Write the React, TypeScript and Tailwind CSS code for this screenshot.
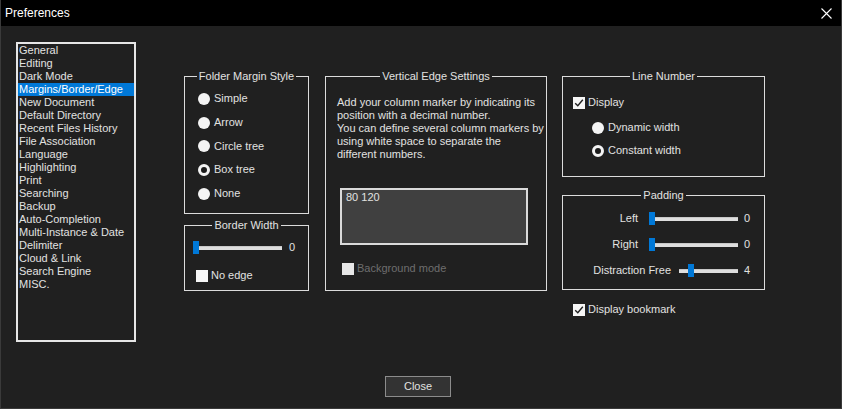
import React from "react";

const items = [
  "General",
  "Editing",
  "Dark Mode",
  "Margins/Border/Edge",
  "New Document",
  "Default Directory",
  "Recent Files History",
  "File Association",
  "Language",
  "Highlighting",
  "Print",
  "Searching",
  "Backup",
  "Auto-Completion",
  "Multi-Instance & Date",
  "Delimiter",
  "Cloud & Link",
  "Search Engine",
  "MISC.",
];

function Group({
  title,
  className,
  children,
}: {
  title: string;
  className: string;
  children?: React.ReactNode;
}) {
  return (
    <div className={"relative border border-[#dcdcdc] " + className}>
      <div className="absolute -top-[7px] left-0 right-0 flex justify-center">
        <span className="bg-[#202020] px-[2px] leading-[13px] whitespace-nowrap">{title}</span>
      </div>
      {children}
    </div>
  );
}

function Radio({ checked, label }: { checked?: boolean; label: string }) {
  return (
    <div className="flex items-center gap-[4px]">
      {checked ? (
        <span className="w-3 h-3 rounded-full border-[3px] border-[#f4f4f4] bg-[#1c1c1c] shrink-0" />
      ) : (
        <span className="w-3 h-3 rounded-full bg-[#f4f4f4] shrink-0" />
      )}
      <span className="leading-[13px] whitespace-nowrap">{label}</span>
    </div>
  );
}

function Check({ checked, disabled }: { checked?: boolean; disabled?: boolean }) {
  return (
    <span
      className={
        "w-3 h-3 shrink-0 flex items-center justify-center " +
        (disabled ? "bg-[#e6e6e6]" : "bg-[#f6f6f6]")
      }
    >
      {checked && (
        <svg width="10" height="10" viewBox="0 0 10 10">
          <path d="M1.2 5.2 L3.8 7.8 L8.8 1.8" fill="none" stroke="#202020" strokeWidth="1.4" />
        </svg>
      )}
    </span>
  );
}

function Slider({ width, thumb }: { width: number; thumb: number }) {
  return (
    <div className="relative h-[13px] shrink-0" style={{ width }}>
      <div className="absolute left-0 right-0 top-[4.5px] h-[4px] bg-[#dedede] border-t border-[#c8c8c8]" />
      <div className="absolute top-0 h-[13px] w-[6px] bg-[#0078d7]" style={{ left: thumb }} />
    </div>
  );
}

export default function App() {
  return (
    <div className="w-[842px] h-[409px] flex flex-col bg-[#202020] border-l border-r border-b border-[#3a3a3a] font-['Liberation_Sans',Arial,sans-serif] text-[11px] text-[#e2e2e0] overflow-hidden">
      <div className="h-[26px] shrink-0 bg-black flex items-center justify-between pl-[4px] pr-[9px]">
        <span className="text-[12px] text-white">Preferences</span>
        <svg width="11" height="11" viewBox="0 0 11 11">
          <path d="M0.5 0.5 L10.5 10.5 M10.5 0.5 L0.5 10.5" stroke="#ffffff" strokeWidth="1.1" />
        </svg>
      </div>

      <div className="flex items-start pt-[16px] pl-[15px]">
        {/* Category list */}
        <div className="w-[120px] h-[300px] shrink-0 border-2 border-[#e6e6e6]">
          {items.map((it) => (
            <div
              key={it}
              className={
                "h-[13px] leading-[13px] pl-[1px] whitespace-nowrap " +
                (it === "Margins/Border/Edge" ? "bg-[#0078d7] text-white" : "")
              }
            >
              {it}
            </div>
          ))}
        </div>

        {/* Column 2 */}
        <div className="ml-[48px] mt-[34px] w-[125px] shrink-0 flex flex-col">
          <Group title="Folder Margin Style" className="h-[138px] pt-[10px] pl-[13px]">
            <div className="flex flex-col">
              <div className="h-[23.7px] flex items-center"><Radio label="Simple" /></div>
              <div className="h-[23.7px] flex items-center"><Radio label="Arrow" /></div>
              <div className="h-[23.7px] flex items-center"><Radio label="Circle tree" /></div>
              <div className="h-[23.7px] flex items-center"><Radio checked label="Box tree" /></div>
              <div className="h-[23.7px] flex items-center"><Radio label="None" /></div>
            </div>
          </Group>
          <Group title="Border Width" className="mt-[11px] h-[66px] pt-[15px] pl-[8px]">
            <div className="flex items-center">
              <Slider width={89} thumb={0} />
              <span className="ml-[7px] leading-[13px]">0</span>
            </div>
            <div className="mt-[15px] ml-[3px] flex items-center gap-[3px]">
              <Check />
              <span className="leading-[13px]">No edge</span>
            </div>
          </Group>
        </div>

        {/* Column 3 */}
        <div className="ml-[16px] mt-[34px] w-[222px] shrink-0">
          <Group title="Vertical Edge Settings" className="h-[215px] pt-[19px] pl-[11px]">
            <div className="leading-[13px] whitespace-nowrap">
              Add your column marker by indicating its
              <br />
              position with a decimal number.
              <br />
              You can define several column markers by
              <br />
              using white space to separate the
              <br />
              different numbers.
            </div>
            <div className="mt-[27px] ml-[3px] w-[188px] h-[57px] border-2 border-[#dadada] bg-[#404040] pl-[4px] pt-[1px] leading-[13px]">
              80 120
            </div>
            <div className="mt-[17px] ml-[5px] flex items-center gap-[3px]">
              <Check disabled />
              <span className="leading-[13px] text-[#6e6e6e]">Background mode</span>
            </div>
          </Group>
        </div>

        {/* Column 4 */}
        <div className="ml-[15px] mt-[34px] w-[203px] shrink-0 flex flex-col">
          <Group title="Line Number" className="h-[101px] pt-[19px] pl-[10px]">
            <div className="flex items-center gap-[3px]">
              <Check checked />
              <span className="leading-[13px]">Display</span>
            </div>
            <div className="mt-[7px] pl-[19px] flex flex-col">
              <div className="h-[23px] flex items-center"><Radio label="Dynamic width" /></div>
              <div className="h-[23px] flex items-center"><Radio checked label="Constant width" /></div>
            </div>
          </Group>
          <Group title="Padding" className="mt-[18px] h-[95px] pt-[16px]">
            <div className="flex flex-col gap-[13px]">
              <div className="flex items-center justify-end">
                <span className="leading-[13px] mr-[11px]">Left</span>
                <Slider width={89} thumb={0} />
                <span className="w-[26px] pl-[6px] leading-[13px]">0</span>
              </div>
              <div className="flex items-center justify-end">
                <span className="leading-[13px] mr-[11px]">Right</span>
                <Slider width={89} thumb={0} />
                <span className="w-[26px] pl-[6px] leading-[13px]">0</span>
              </div>
              <div className="flex items-center justify-end">
                <span className="leading-[13px] mr-[8px]">Distraction Free</span>
                <Slider width={59} thumb={9} />
                <span className="w-[26px] pl-[6px] leading-[13px]">4</span>
              </div>
            </div>
          </Group>
          <div className="mt-[13px] ml-[11px] flex items-center gap-[3px]">
            <Check checked />
            <span className="leading-[13px]">Display bookmark</span>
          </div>
        </div>
      </div>

      <div className="mt-[34px] pl-[384px]">
        <button className="w-[66px] h-[21px] bg-[#333333] border border-[#8c8c8c] text-[11px] text-[#e2e2e0] leading-[13px]">
          Close
        </button>
      </div>
    </div>
  );
}
